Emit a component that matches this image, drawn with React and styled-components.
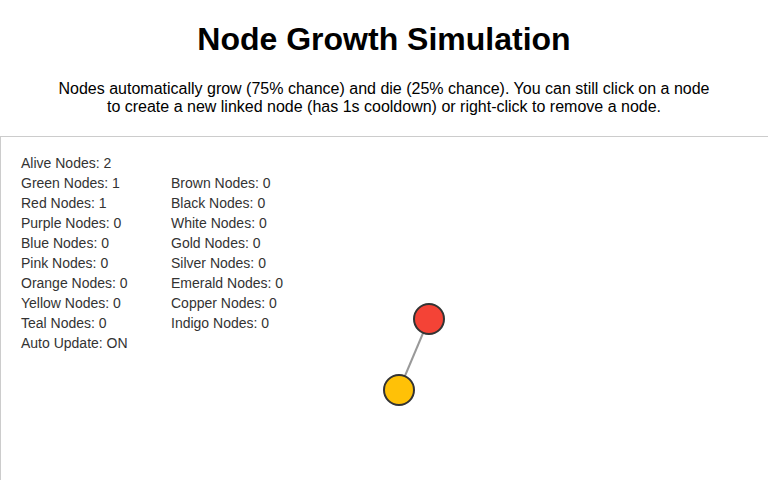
import React from 'react';
import styled, { createGlobalStyle } from 'styled-components';

const GlobalStyle = createGlobalStyle`
  body {
    margin: 0;
    overflow: hidden;
    background: #fff;
    font-family: "Liberation Sans", Arial, sans-serif;
  }
`;

const Page = styled.div`
  text-align: center;
  color: #000;
`;

const Title = styled.h1`
  font-size: 32px;
  font-weight: bold;
  margin: 21.44px 0;
`;

const Intro = styled.p`
  font-size: 16px;
  line-height: 18.4px;
  max-width: 656px;
  margin: 16px auto;
`;

const Board = styled.div`
  position: relative;
  margin-top: 19px;
  width: 800px;
  height: 600px;
  border: 1px solid #ccc;
  text-align: left;
`;

const Stats = styled.div`
  position: absolute;
  top: 16px;
  left: 20px;
  display: grid;
  grid-template-columns: 150px 150px;
  font-size: 14px;
  line-height: 20px;
  color: #333;
`;

const Stat = styled.div`
  grid-column: ${(p) => p.$col || 'auto'};
  white-space: nowrap;
`;

const Graph = styled.svg`
  display: block;
`;

const left = ['Green', 'Red', 'Purple', 'Blue', 'Pink', 'Orange', 'Yellow', 'Teal'];
const right = ['Brown', 'Black', 'White', 'Gold', 'Silver', 'Emerald', 'Copper', 'Indigo'];
const counts = { Green: 1, Red: 1 };

const nodes = [
  { id: 1, x: 428, y: 182, color: '#f44336' },
  { id: 2, x: 398, y: 253, color: '#ffc107' },
];
const links = [[1, 2]];

const App = () => {
  const byId = Object.fromEntries(nodes.map((n) => [n.id, n]));
  return (
    <Page>
      <GlobalStyle />
      <Title>Node Growth Simulation</Title>
      <Intro>
        Nodes automatically grow (75% chance) and die (25% chance). You can still click on a node
        to create a new linked node (has 1s cooldown) or right-click to remove a node.
      </Intro>
      <Board>
        <Graph width="800" height="600">
          {links.map(([a, b]) => (
            <line
              key={`${a}-${b}`}
              x1={byId[a].x}
              y1={byId[a].y}
              x2={byId[b].x}
              y2={byId[b].y}
              stroke="#999"
              strokeWidth="2"
            />
          ))}
          {nodes.map((n) => (
            <circle key={n.id} cx={n.x} cy={n.y} r="15" fill={n.color} stroke="#333" strokeWidth="2" />
          ))}
        </Graph>
        <Stats>
          <Stat $col="1">Alive Nodes: {nodes.length}</Stat>
          <Stat />
          {left.map((name, i) => (
            <React.Fragment key={name}>
              <Stat $col="1">{name} Nodes: {counts[name] || 0}</Stat>
              <Stat $col="2">{right[i]} Nodes: {counts[right[i]] || 0}</Stat>
            </React.Fragment>
          ))}
          <Stat $col="1">Auto Update: ON</Stat>
        </Stats>
      </Board>
    </Page>
  );
};

export default App;
